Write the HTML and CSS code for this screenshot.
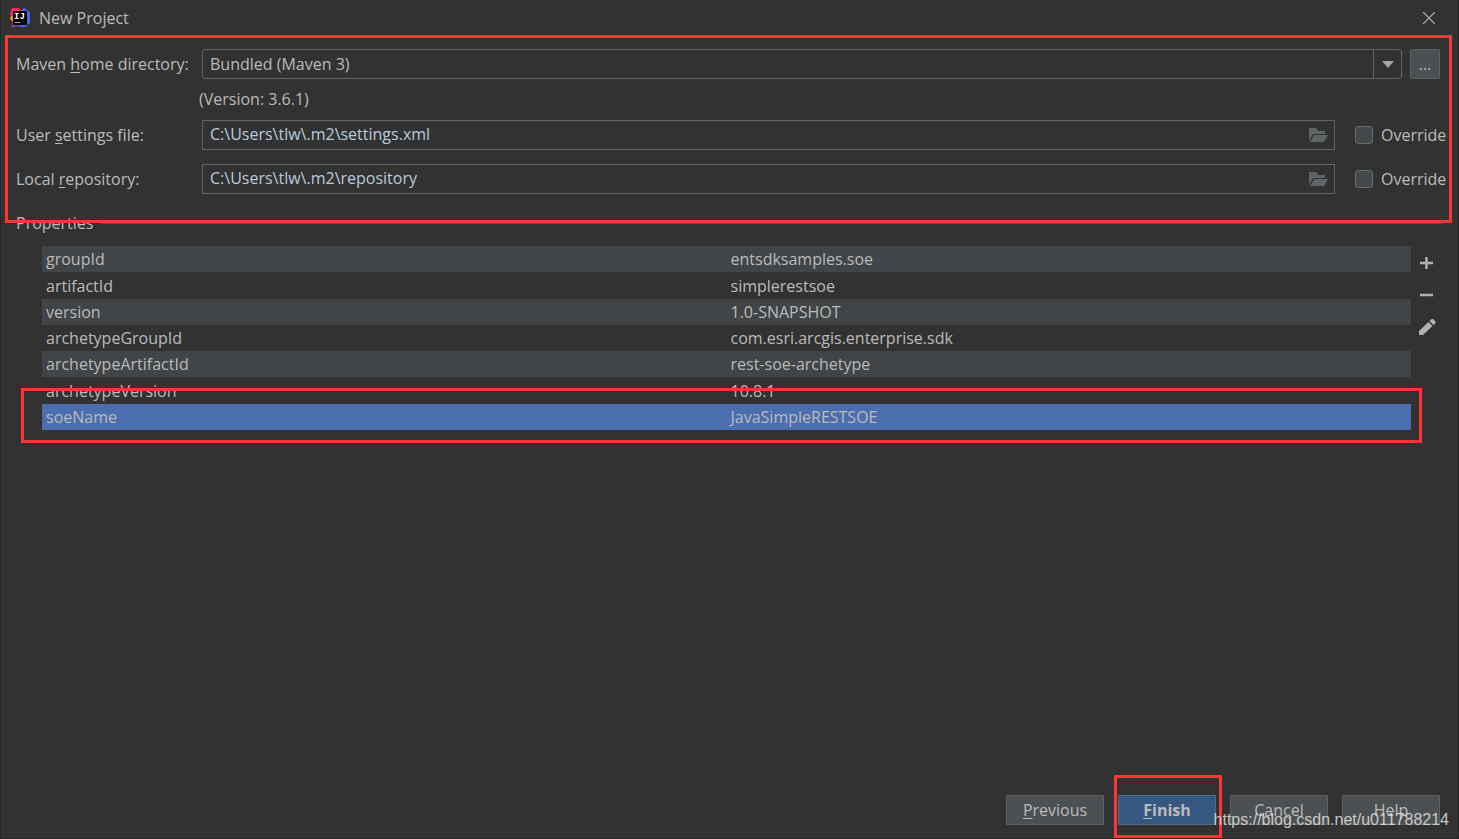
FILE: index.html
```html
<!DOCTYPE html>
<html lang="en">
<head>
<meta charset="utf-8">
<meta name="viewport" content="width=device-width, initial-scale=1">
<title>New Project</title>
<link rel="stylesheet" href="styles.css">
</head>
<body>
<div class="dialog">
  <header class="titlebar">
    <svg class="logo" viewBox="0 0 22 22" aria-hidden="true">
      <path d="M3 1h6l4 3-3 8-8-1-1-4z" fill="#fb2a62"/>
      <path d="M2 9l5 1v6l-3-1-3-3z" fill="#fa8a26"/>
      <path d="M3 14l9 1 1 5-6-1-4 2z" fill="#8a3fb8"/>
      <path d="M13 3l2-2 6 4v11l-5 4-4 0-2-3 6-5z" fill="#3c6cf0"/>
      <path d="M12 4l3-3 3 3v3h-6z" fill="#5a60e4"/>
      <rect x="4" y="4" width="14" height="14" fill="#050505"/>
      <text x="5" y="12" class="logo-text">IJ</text>
      <rect x="6" y="15" width="5" height="1" fill="#aaa"/>
    </svg>
    <h1 class="title">New Project</h1>
    <button class="close" type="button" aria-label="Close">
      <svg viewBox="0 0 12 12" aria-hidden="true"><path d="M0 0L12 12M12 0L0 12" stroke="#b8b8b8" stroke-width="1.2"/></svg>
    </button>
  </header>

  <main class="content">
    <form class="settings">
      <div class="row">
        <label class="name" for="home">Maven <u>h</u>ome directory:</label>
        <div class="combo">
          <select id="home" class="field"><option>Bundled (Maven 3)</option></select>
          <span class="arrow"><svg viewBox="0 0 12 7" aria-hidden="true"><path d="M0 0h12L6 7z" fill="#a2a5a7"/></svg></span>
        </div>
        <button class="button browse" type="button">...</button>
      </div>
      <p class="version">(Version: 3.6.1)</p>
      <div class="row">
        <label class="name" for="user">User <u>s</u>ettings file:</label>
        <div class="path">
          <input id="user" class="field" type="text" value="C:\Users\tlw\.m2\settings.xml">
          <svg class="folder" viewBox="0 0 19 15" aria-hidden="true"><path d="M0 0h7l2 3h7v3H4L0 13z"/><path d="M5 7h14l-4 7H1z"/></svg>
        </div>
        <label class="override"><input type="checkbox">Override</label>
      </div>
      <div class="row">
        <label class="name" for="repo">Local <u>r</u>epository:</label>
        <div class="path">
          <input id="repo" class="field" type="text" value="C:\Users\tlw\.m2\repository">
          <svg class="folder" viewBox="0 0 19 15" aria-hidden="true"><path d="M0 0h7l2 3h7v3H4L0 13z"/><path d="M5 7h14l-4 7H1z"/></svg>
        </div>
        <label class="override"><input type="checkbox">Override</label>
      </div>
      <span class="mark mark-settings"></span>
    </form>

    <h2 class="section">Properties</h2>
    <section class="properties">
      <div class="table-wrap">
        <table>
          <tbody>
            <tr><td>groupId</td><td>entsdksamples.soe</td></tr>
            <tr><td>artifactId</td><td>simplerestsoe</td></tr>
            <tr><td>version</td><td>1.0-SNAPSHOT</td></tr>
            <tr><td>archetypeGroupId</td><td>com.esri.arcgis.enterprise.sdk</td></tr>
            <tr><td>archetypeArtifactId</td><td>rest-soe-archetype</td></tr>
            <tr><td>archetypeVersion</td><td>10.8.1</td></tr>
            <tr class="selected"><td>soeName</td><td>JavaSimpleRESTSOE</td></tr>
          </tbody>
        </table>
        <span class="mark mark-row"></span>
      </div>
      <div class="tools">
        <button type="button" aria-label="Add"><svg viewBox="0 0 18 18" aria-hidden="true"><path d="M2 9h13M8.500 3v12" stroke="#afb1b3" stroke-width="2.500"/></svg></button>
        <button type="button" aria-label="Remove"><svg viewBox="0 0 18 18" aria-hidden="true"><path d="M2 9h13" stroke="#afb1b3" stroke-width="2.500"/></svg></button>
        <button type="button" aria-label="Edit"><svg viewBox="0 0 18 18" aria-hidden="true"><path d="M1 13L10.500 4l4 4L5 17H1zM11.500 3l1.800-1.700q1-.8 2 0l2 2q.8 1 0 2L15.500 7z" fill="#afb1b3"/></svg></button>
      </div>
    </section>
  </main>

  <footer class="actions">
    <button class="button" type="button"><u>P</u>revious</button>
    <span class="primary-wrap">
      <button class="button primary" type="button"><u>F</u>inish</button>
      <span class="mark mark-finish"></span>
    </span>
    <button class="button" type="button">Cancel</button>
    <button class="button" type="button">Help</button>
    <span class="watermark">https://blog.csdn.net/u011788214</span>
  </footer>
</div>
</body>
</html>
```
FILE: styles.css
```css
* { box-sizing: border-box; }

body {
  margin: 0;
  background: #323232;
  color: #bbbbbb;
  font: 16px/24px "Open Sans", "Noto Sans", sans-serif;
}

button, input, select { font: inherit; color: inherit; margin: 0; }
svg { display: block; }
u { text-underline-offset: 2px; text-decoration-skip-ink: none; }

.dialog {
  display: flex;
  flex-direction: column;
  min-height: 100vh;
  border: 1px solid #262626;
  border-top: 0;
}

.titlebar {
  display: flex;
  align-items: center;
  gap: 8px;
  height: 36px;
  padding: 0 23px 0 8px;
}
.logo { width: 22px; height: 22px; }
.logo-text { font: bold 9px "Liberation Mono", monospace; fill: #ffffff; }
.title { flex: 1; margin: 0; font-size: 16px; font-weight: 400; }
.close { padding: 0; border: 0; background: none; }
.close svg { width: 12px; height: 12px; }

.content { flex: 1; }

.settings {
  position: relative;
  display: flex;
  flex-direction: column;
  gap: 14px;
  padding: 13px 15px 17px;
}
.row { display: flex; align-items: center; }
.name { width: 186px; }

.field {
  display: block;
  width: 100%;
  height: 30px;
  padding: 0 7px;
  border: 1px solid #646464;
  border-radius: 0;
  background: #323232;
}
select.field { appearance: none; border-radius: 3px; }
.path input { padding-right: 32px; padding-bottom: 2px; color: #bbcbdc; }

.combo, .path { position: relative; flex: 1; }
.arrow {
  position: absolute;
  top: 1px;
  right: 1px;
  bottom: 1px;
  display: grid;
  place-items: center;
  width: 28px;
  border-left: 1px solid #646464;
  pointer-events: none;
}
.arrow svg { width: 12px; height: 7px; }
.folder {
  position: absolute;
  top: 8px;
  right: 7px;
  width: 19px;
  height: 15px;
  fill: #5f6467;
}

.version { margin: -6px 0 -5px 183px; }

.button {
  width: 98px;
  height: 30px;
  padding: 0;
  border: 1px solid #5e6060;
  border-radius: 1px;
  background: #4c5052;
}
.browse { width: 30px; margin: 0 3px 0 8px; }

.override {
  display: flex;
  align-items: center;
  gap: 8px;
  width: 88px;
  margin-left: 20px;
  white-space: nowrap;
}
.override input {
  appearance: none;
  flex: none;
  width: 18px;
  height: 18px;
  border: 1px solid #6b6b6b;
  border-radius: 3px;
  background: #43494a;
}

.section {
  display: flex;
  align-items: center;
  gap: 8px;
  margin: 0 15px;
  font-size: 16px;
  font-weight: 400;
}
.section::after { content: ""; flex: 1; height: 1px; background: #515151; }

.properties {
  display: flex;
  gap: 7px;
  padding: 11px 22px 0 41px;
}
.table-wrap { position: relative; flex: 1; }
table { width: 100%; border-collapse: collapse; table-layout: fixed; }
tr { height: 26px; }
tr:nth-child(4n+2) { height: 27px; }
tr:nth-child(odd) { background: #414547; }
tr.selected { background: #4b6eaf; }
td { padding: 0 4px; }

.tools { display: flex; flex-direction: column; gap: 14px; padding-top: 8px; }
.tools button { padding: 0; border: 0; background: none; }
.tools svg { width: 18px; height: 18px; }

.actions {
  position: relative;
  display: flex;
  justify-content: flex-end;
  gap: 14px;
  padding: 0 18px 13px;
}
.primary-wrap { position: relative; display: flex; }
.primary { border-color: #4c708c; background: #365880; font-weight: 700; }
.watermark {
  position: absolute;
  right: 9px;
  bottom: 6px;
  color: rgba(225, 225, 225, 0.85);
  font: 16px/24px "Liberation Sans", Arial, sans-serif;
  pointer-events: none;
}

.mark { position: absolute; border: 3px solid #ff3434; pointer-events: none; }
.mark-settings { top: -1px; right: 6px; bottom: -12px; left: 4px; }
.mark-row { right: -11px; bottom: -13px; left: -21px; height: 55px; }
.mark-finish { top: -20px; right: -6px; bottom: -13px; left: -4px; }
```
